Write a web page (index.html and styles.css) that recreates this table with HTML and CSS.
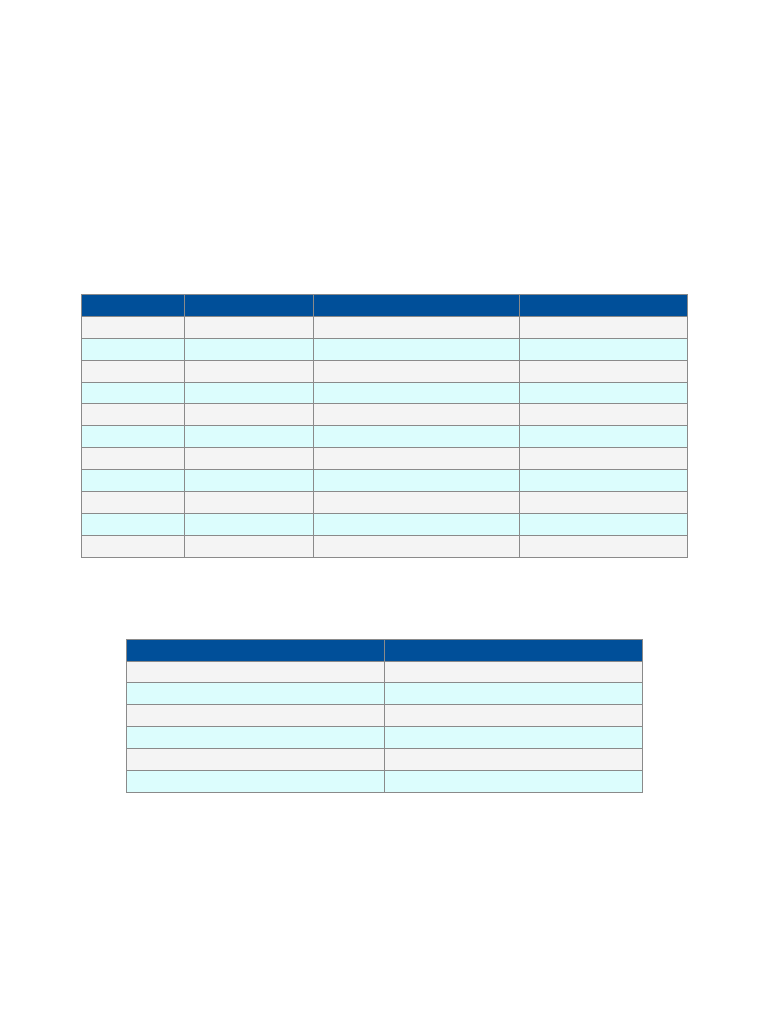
FILE: index.html
```html
<!DOCTYPE html>
<html lang="en">
<head>
<meta charset="utf-8">
<title>Tables</title>
<link rel="stylesheet" href="styles.css">
</head>
<body>
<main class="page">
  <table class="grid grid-wide">
    <colgroup>
      <col class="c1"><col class="c2"><col class="c3"><col class="c4">
    </colgroup>
    <thead>
      <tr><th></th><th></th><th></th><th></th></tr>
    </thead>
    <tbody>
      <tr><td></td><td></td><td></td><td></td></tr>
      <tr><td></td><td></td><td></td><td></td></tr>
      <tr><td></td><td></td><td></td><td></td></tr>
      <tr><td></td><td></td><td></td><td></td></tr>
      <tr><td></td><td></td><td></td><td></td></tr>
      <tr><td></td><td></td><td></td><td></td></tr>
      <tr><td></td><td></td><td></td><td></td></tr>
      <tr><td></td><td></td><td></td><td></td></tr>
      <tr><td></td><td></td><td></td><td></td></tr>
      <tr><td></td><td></td><td></td><td></td></tr>
      <tr><td></td><td></td><td></td><td></td></tr>
    </tbody>
  </table>

  <table class="grid grid-narrow">
    <colgroup>
      <col class="h1"><col class="h2">
    </colgroup>
    <thead>
      <tr><th></th><th></th></tr>
    </thead>
    <tbody>
      <tr><td></td><td></td></tr>
      <tr><td></td><td></td></tr>
      <tr><td></td><td></td></tr>
      <tr><td></td><td></td></tr>
      <tr><td></td><td></td></tr>
      <tr><td></td><td></td></tr>
    </tbody>
  </table>
</main>
</body>
</html>
```

FILE: styles.css
```css
html, body {
  margin: 0;
  padding: 0;
  background: #ffffff;
  font-family: "Liberation Sans", Arial, sans-serif;
  font-size: 13px;
}

.page {
  display: flex;
  flex-direction: column;
  align-items: center;
  padding-top: 294px;
  gap: 81px;
}

.grid {
  border-collapse: collapse;
  table-layout: fixed;
}

.grid th,
.grid td {
  border: 1px solid #8a8a8a;
  padding: 0;
  height: 20.9px;
}

.grid th {
  background: #004f99;
}

.grid tbody tr:nth-child(odd) td {
  background: #f4f4f4;
}

.grid tbody tr:nth-child(even) td {
  background: #dcfdfd;
}

.grid-wide {
  width: 606px;
}

.grid-wide .c1 { width: 103px; }
.grid-wide .c2 { width: 129px; }
.grid-wide .c3 { width: 206px; }
.grid-wide .c4 { width: 168px; }

.grid-narrow {
  width: 516px;
}

.grid-narrow .h1 { width: 258px; }
.grid-narrow .h2 { width: 258px; }
```
